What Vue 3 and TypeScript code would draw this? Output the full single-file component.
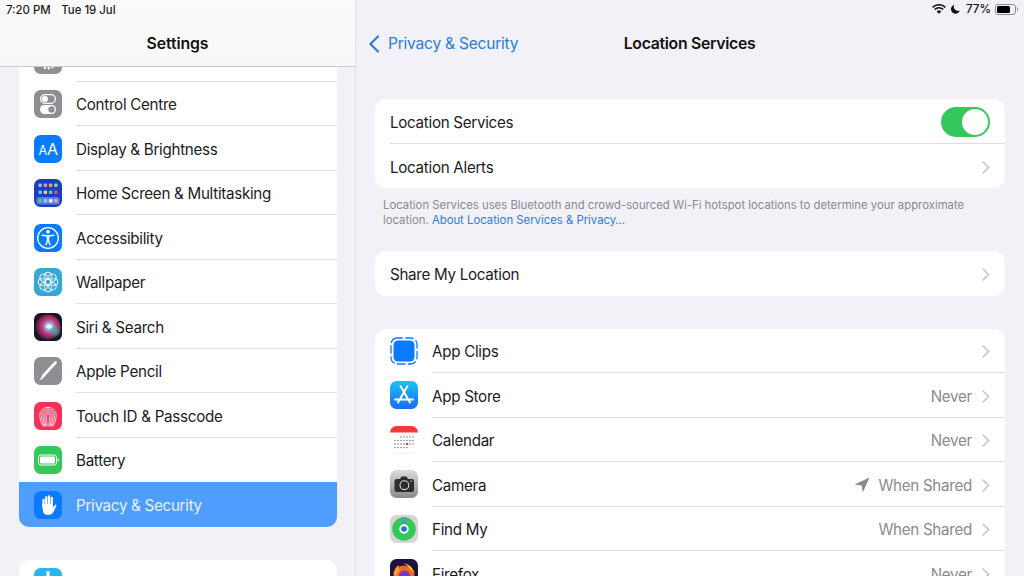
<script setup lang="ts">
interface SideRow { label: string; icon: string; selected?: boolean }
interface AppRow { label: string; icon: string; value?: string; located?: boolean }

const sideRows: SideRow[] = [
  { label: '', icon: 'general' },
  { label: 'Control Centre', icon: 'control' },
  { label: 'Display & Brightness', icon: 'display' },
  { label: 'Home Screen & Multitasking', icon: 'home' },
  { label: 'Accessibility', icon: 'access' },
  { label: 'Wallpaper', icon: 'wallpaper' },
  { label: 'Siri & Search', icon: 'siri' },
  { label: 'Apple Pencil', icon: 'pencil' },
  { label: 'Touch ID & Passcode', icon: 'touch' },
  { label: 'Battery', icon: 'battery' },
  { label: 'Privacy & Security', icon: 'privacy', selected: true },
]

const appRows: AppRow[] = [
  { label: 'App Clips', icon: 'clips' },
  { label: 'App Store', icon: 'store', value: 'Never' },
  { label: 'Calendar', icon: 'calendar', value: 'Never' },
  { label: 'Camera', icon: 'camera', value: 'When Shared', located: true },
  { label: 'Find My', icon: 'findmy', value: 'When Shared' },
  { label: 'Firefox', icon: 'firefox', value: 'Never' },
]

const petals = [0, 45, 90, 135, 180, 225, 270, 315]
const dockColors = ['#58c46b', '#8fd0f5', '#f4f4f8', '#e9a1a5']
const homeDots = [
  ['#9db5f5', '#d98ed8', '#f0a060', '#8fd0a5'],
  ['#5fd0f0', '#f5d060', '#50d0a0', '#e85050'],
]
const calendarDots = [
  { y: 11, xs: [11, 14, 17, 20, 23] },
  { y: 14.5, xs: [5, 8, 11, 14, 17, 20, 23] },
  { y: 18, xs: [5, 8, 11, 14, 20, 23] },
  { y: 21.5, xs: [5, 8, 11, 14, 17] },
]
const fingerprint = [1.5, 3.2, 4.9, 6.6, 8.3]
const printPath = (r: number) =>
  `M${14 - r * 0.6} 24 Q${14 - r} 20 ${14 - r} 13.5 a${r} ${r} 0 0 1 ${2 * r} 0 Q${14 + r} 20 ${14 + r * 0.6} 24`
</script>

<template>
  <div class="screen">
    <aside class="sidebar">
      <header class="side-head">
        <div class="status-left">
          <span>7:20 PM</span>
          <span>Tue 19 Jul</span>
        </div>
        <h1 class="side-title">Settings</h1>
      </header>
      <div class="side-scroll">
        <ul class="side-card">
          <li v-for="row in sideRows" :key="row.icon" class="side-row" :class="{ selected: row.selected }">
            <svg class="icon" viewBox="0 0 28 28">
              <template v-if="row.icon === 'general'">
                <rect width="28" height="28" fill="#8e8e93" />
                <circle cx="14" cy="14" r="8" fill="none" stroke="#fff" stroke-width="3" stroke-dasharray="2 1.6" />
                <circle cx="14" cy="14" r="5" fill="none" stroke="#fff" stroke-width="1.2" />
              </template>
              <template v-else-if="row.icon === 'control'">
                <rect width="28" height="28" fill="#8e8e93" />
                <rect x="6.6" y="4.6" width="14.8" height="8.8" rx="4.4" fill="none" stroke="#fff" stroke-width="1.2" />
                <circle cx="11" cy="9" r="3" fill="#fff" />
                <rect x="6" y="15" width="16" height="9" rx="4.5" fill="#fff" />
                <circle cx="17.5" cy="19.5" r="3.2" fill="#8e8e93" />
              </template>
              <template v-else-if="row.icon === 'display'">
                <rect width="28" height="28" fill="#0a7aff" />
                <text x="4.6" y="19.5" class="aa small-a">A</text>
                <text x="13" y="19.5" class="aa big-a">A</text>
              </template>
              <template v-else-if="row.icon === 'home'">
                <rect width="28" height="28" fill="#1b3fc4" />
                <template v-for="(line, r) in homeDots" :key="r">
                  <rect v-for="(color, c) in line" :key="c" :x="4.5 + c * 5.2" :y="4.5 + r * 7" width="3.4" height="3.4" rx="1" :fill="color" />
                </template>
                <rect x="2.5" y="18" width="23" height="7.5" rx="2.5" fill="#5d7de0" />
                <rect v-for="(color, c) in dockColors" :key="color" :x="4.5 + c * 5.2" y="20" width="3.6" height="3.6" rx="1" :fill="color" />
              </template>
              <template v-else-if="row.icon === 'access'">
                <rect width="28" height="28" fill="#0a7aff" />
                <circle cx="14" cy="14" r="10.3" fill="none" stroke="#fff" stroke-width="1.3" />
                <circle cx="14" cy="7.9" r="1.8" fill="#fff" />
                <path d="M8 11.2 L14 12 L20 11.2" fill="none" stroke="#fff" stroke-width="1.6" stroke-linecap="round" stroke-linejoin="round" />
                <path d="M12.6 11.8 H15.4 L15.2 16 L16.8 21.2 L15.4 21.6 L14 17.2 L12.6 21.6 L11.2 21.2 L12.8 16 Z" fill="#fff" />
              </template>
              <template v-else-if="row.icon === 'wallpaper'">
                <rect width="28" height="28" fill="#36a6d9" />
                <circle v-for="a in petals" :key="a" cx="14" cy="7.8" r="3.7" fill="none" stroke="#fff" stroke-width="1" :transform="`rotate(${a} 14 14)`" />
                <circle cx="14" cy="14" r="3" fill="none" stroke="#fff" stroke-width="1" />
              </template>
              <template v-else-if="row.icon === 'siri'">
                <defs>
                  <radialGradient id="siriOrb" cx="0.55" cy="0.48" r="0.55">
                    <stop offset="0" stop-color="#eaf8ff" />
                    <stop offset="0.25" stop-color="#7fb8de" />
                    <stop offset="0.52" stop-color="#d03a78" />
                    <stop offset="1" stop-color="#3a2040" />
                  </radialGradient>
                  <linearGradient id="siriBg" x1="0" y1="0" x2="1" y2="1">
                    <stop offset="0" stop-color="#2a0c20" />
                    <stop offset="1" stop-color="#06222c" />
                  </linearGradient>
                  <radialGradient id="siriTeal" cx="0.5" cy="0.5" r="0.5">
                    <stop offset="0" stop-color="#2fb8a8" stop-opacity="0.9" />
                    <stop offset="1" stop-color="#2fb8a8" stop-opacity="0" />
                  </radialGradient>
                </defs>
                <rect width="28" height="28" fill="url(#siriBg)" />
                <circle cx="14" cy="14" r="12.4" fill="url(#siriOrb)" />
                <circle cx="21" cy="18" r="6.5" fill="url(#siriTeal)" />
                <ellipse cx="15" cy="13.5" rx="3.4" ry="2.2" fill="#f4fbff" opacity="0.7" />
              </template>
              <template v-else-if="row.icon === 'pencil'">
                <rect width="28" height="28" fill="#8e8e93" />
                <path d="M21.5 5.5 L9.2 19" stroke="#fff" stroke-width="2.8" stroke-linecap="round" />
                <path d="M7.8 19 L9.8 20.8 L5.5 23.4 Z" fill="#fff" />
              </template>
              <template v-else-if="row.icon === 'touch'">
                <rect width="28" height="28" fill="#f5325c" />
                <path v-for="r in fingerprint" :key="r" :d="printPath(r)" fill="none" stroke="#ffe4ea" stroke-width="0.85" stroke-linecap="round" />
              </template>
              <template v-else-if="row.icon === 'battery'">
                <rect width="28" height="28" fill="#34c759" />
                <rect x="4.5" y="9" width="18" height="10" rx="2.4" fill="none" stroke="#fff" stroke-width="1" />
                <rect x="6" y="10.5" width="15" height="7" rx="1.2" fill="#fff" />
                <rect x="23.5" y="12.5" width="1.2" height="3" rx="0.6" fill="#fff" />
              </template>
              <template v-else>
                <rect width="28" height="28" fill="#0a7aff" />
                <path d="M9.5 9 V16 M12.2 6.5 V14 M15 5.5 V14 M17.8 7 V15" stroke="#fff" stroke-width="2.3" stroke-linecap="round" />
                <path d="M8.4 13 H19 V16.5 L21.4 13.5 L22.6 14.5 L19.4 21 Q17.8 24 14 24 Q9.6 24 8.9 20 Z" fill="#fff" />
              </template>
            </svg>
            <span class="side-label">{{ row.label }}</span>
          </li>
        </ul>
        <ul class="side-card second">
          <li class="side-row">
            <svg class="icon" viewBox="0 0 28 28">
              <rect width="28" height="28" fill="#2bb5f0" />
              <path d="M14 3 L14 9" stroke="#fff" stroke-width="3" />
            </svg>
          </li>
        </ul>
      </div>
    </aside>

    <main class="detail">
      <div class="status-right">
        <svg class="wifi" viewBox="0 0 14 10">
          <path d="M0.6 3.4 A9 9 0 0 1 13.4 3.4 M2.7 5.5 A6 6 0 0 1 11.3 5.5" fill="none" stroke="#111" stroke-width="1.6" />
          <path d="M4.7 7.4 A3.2 3.2 0 0 1 9.3 7.4 L7 9.8 Z" fill="#111" />
        </svg>
        <svg class="moon" viewBox="0 0 10 10">
          <path d="M3.6 0.4 A5 5 0 1 0 9.7 6.6 A4.6 4.6 0 0 1 3.6 0.4 Z" fill="#111" />
        </svg>
        <span class="percent">77%</span>
        <span class="batt"><span class="batt-level"></span></span>
        <span class="batt-tip"></span>
      </div>

      <nav class="nav">
        <div class="back">
          <svg class="back-chevron" viewBox="0 0 12 18">
            <path d="M10 1.5 L2.4 9 L10 16.5" fill="none" stroke="#2a7ed8" stroke-width="2.2" stroke-linecap="round" stroke-linejoin="round" />
          </svg>
          <span>Privacy &amp; Security</span>
        </div>
        <h2 class="nav-title">Location Services</h2>
      </nav>

      <section class="card">
        <div class="row">
          <span class="row-label">Location Services</span>
          <span class="toggle"><span class="knob"></span></span>
        </div>
        <div class="row">
          <span class="row-label">Location Alerts</span>
          <svg class="chevron" viewBox="0 0 8 13"><path d="M1 1 L6.6 6.5 L1 12" /></svg>
        </div>
      </section>
      <p class="foot">
        Location Services uses Bluetooth and crowd-sourced Wi-Fi hotspot locations to determine your approximate
        location. <a class="foot-link">About Location Services &amp; Privacy…</a>
      </p>

      <section class="card share">
        <div class="row">
          <span class="row-label">Share My Location</span>
          <svg class="chevron" viewBox="0 0 8 13"><path d="M1 1 L6.6 6.5 L1 12" /></svg>
        </div>
      </section>

      <section class="card apps">
        <div v-for="app in appRows" :key="app.label" class="row app-row">
          <svg class="icon" viewBox="0 0 28 28">
            <template v-if="app.icon === 'clips'">
              <rect width="28" height="28" fill="#fff" />
              <rect x="1" y="1" width="26" height="26" rx="6.5" fill="none" stroke="#0a7aff" stroke-width="1.3" stroke-dasharray="8.4 2.4" stroke-dashoffset="3" />
              <rect x="3.5" y="3.5" width="21" height="21" rx="4.5" fill="#0a7aff" />
            </template>
            <template v-else-if="app.icon === 'store'">
              <defs>
                <linearGradient id="storeBg" x1="0" y1="0" x2="0" y2="1">
                  <stop offset="0" stop-color="#1cc0f8" />
                  <stop offset="1" stop-color="#1a6cf0" />
                </linearGradient>
              </defs>
              <rect width="28" height="28" fill="url(#storeBg)" />
              <path d="M10.5 5 L20 21.5 M17.5 5 L8 21.5 M5 18.6 H23" stroke="#fff" stroke-width="2" stroke-linecap="round" fill="none" />
            </template>
            <template v-else-if="app.icon === 'calendar'">
              <rect width="28" height="28" fill="#fff" />
              <rect width="28" height="6.5" fill="#f43a36" />
              <rect y="26.5" width="28" height="1.5" fill="#f2f2f2" />
              <template v-for="line in calendarDots" :key="line.y">
                <circle v-for="x in line.xs" :key="x" :cx="x" :cy="line.y" r="0.75" fill="#77777c" />
              </template>
              <circle cx="17" cy="18" r="1.2" fill="#e8383a" />
            </template>
            <template v-else-if="app.icon === 'camera'">
              <defs>
                <linearGradient id="camBg" x1="0" y1="0" x2="0" y2="1">
                  <stop offset="0" stop-color="#dcdcde" />
                  <stop offset="1" stop-color="#8a8a8c" />
                </linearGradient>
              </defs>
              <rect width="28" height="28" fill="url(#camBg)" />
              <path d="M6.5 9 H10 L11.5 6.6 H16.5 L18 9 H22 Q24 9 24 11 V20 Q24 22 22 22 H6.5 Q4.5 22 4.5 20 V11 Q4.5 9 6.5 9 Z" fill="#2c2c2e" />
              <circle cx="14.4" cy="15.2" r="4.4" fill="#2c2c2e" stroke="#d8d8d8" stroke-width="1.1" />
              <circle cx="21" cy="11.2" r="0.8" fill="#f0d060" />
            </template>
            <template v-else-if="app.icon === 'findmy'">
              <rect width="28" height="28" fill="#d4d6d4" />
              <circle cx="14" cy="14" r="11.8" fill="#34c85a" />
              <path d="M11.5 2.2 H16.5 L15.6 9 H12.4 Z" fill="#4f9dc0" />
              <circle cx="14" cy="14" r="4.7" fill="#fff" />
              <circle cx="14" cy="14" r="2.8" fill="#1f74d8" />
            </template>
            <template v-else>
              <rect width="28" height="28" fill="#1f1240" />
              <circle cx="14" cy="17" r="10.5" fill="#f2681f" />
              <path d="M13 4 Q24 6 25 17 Q24 12 20 10 Q18 6 13 4 Z" fill="#ffcb2f" />
              <path d="M3.5 14 Q5 8 9 6 Q8 10 10 11 L5 19 Z" fill="#ff9a2c" />
              <circle cx="14.5" cy="17" r="5.5" fill="#7a36c8" />
            </template>
          </svg>
          <span class="row-label">{{ app.label }}</span>
          <span class="spacer"></span>
          <svg v-if="app.located" class="arrow" viewBox="0 0 16 16">
            <path d="M15.5 0.6 L0.5 7.6 L7.6 8.6 L8.8 15.6 Z" fill="#8a8a8e" />
          </svg>
          <span v-if="app.value" class="value">{{ app.value }}</span>
          <svg class="chevron" viewBox="0 0 8 13"><path d="M1 1 L6.6 6.5 L1 12" /></svg>
        </div>
      </section>
    </main>
  </div>
</template>

<style>
html, body { margin: 0; padding: 0; overflow: hidden; }
</style>

<style scoped>
.screen {
  width: 1024px;
  height: 576px;
  display: flex;
  overflow: hidden;
  background: #f1f1f7;
  color: #1c1c1e;
  font-family: Inter, "Liberation Sans", sans-serif;
  font-size: 15.2px;
  letter-spacing: -0.3px;
}
.sidebar {
  width: 355px;
  flex: none;
  display: flex;
  flex-direction: column;
  border-right: 1px solid #dfdfe3;
  height: 576px;
  overflow: hidden;
}
.side-head {
  position: relative;
  z-index: 2;
  height: 66px;
  flex: none;
  background: linear-gradient(#fbfbfb, #f8f8f8);
  border-bottom: 1px solid #c9c9cb;
}
.status-left {
  display: flex;
  gap: 10.5px;
  padding: 3px 0 0 6px;
  height: 15px;
  line-height: 15px;
  font-size: 11.4px;
  font-weight: 500;
  letter-spacing: 0;
}
.side-title {
  margin: 0;
  padding-top: 16px;
  text-align: center;
  font-size: 15.8px;
  line-height: 20px;
  font-weight: 600;
  letter-spacing: -0.1px;
  color: #111;
}
.side-scroll {
  flex: 1;
  margin-top: -30px;
  padding: 0 18px 0 19px;
}
.side-card {
  list-style: none;
  margin: 0;
  padding: 0;
  background: #fff;
  border-radius: 10px;
  overflow: hidden;
}
.side-card.second {
  margin-top: 33px;
}
.side-row {
  display: flex;
  align-items: center;
  box-sizing: border-box;
  height: 44.5px;
  padding: 2px 0 0 15px;
  gap: 14px;
  position: relative;
}
.side-row .icon { margin-top: -1.5px; }
.side-row.selected {
  background: #4f9dff;
  color: #e8f2ff;
}
.side-row:not(.selected):not(:nth-last-child(2)):not(:last-child)::after {
  content: "";
  position: absolute;
  left: 57px;
  right: 0;
  bottom: 0;
  height: 1px;
  background: #dedee0;
}
.icon {
  width: 28px;
  height: 28px;
  flex: none;
  border-radius: 6.5px;
  overflow: hidden;
  display: block;
}
.aa {
  fill: #fff;
  font-family: Inter, sans-serif;
  font-weight: 400;
  letter-spacing: 0;
}
.small-a { font-size: 12.5px; }
.big-a { font-size: 16px; }
.side-label {
  white-space: nowrap;
}
.detail {
  flex: 1;
  min-width: 0;
  height: 576px;
  padding: 0 19px 0 19px;
  box-sizing: border-box;
  overflow: hidden;
}
.status-right {
  height: 18px;
  margin-right: -13px;
  display: flex;
  align-items: center;
  justify-content: flex-end;
  font-size: 11.6px;
  font-weight: 500;
  letter-spacing: 0;
  color: #111;
}
.wifi { width: 14px; height: 10px; margin-right: 5px; }
.moon { width: 9px; height: 10px; margin-right: 6px; }
.percent { margin-right: 3.5px; }
.batt {
  width: 21.5px;
  height: 11px;
  box-sizing: border-box;
  border: 1px solid #8e8e8e;
  border-radius: 3px;
  padding: 1px;
  display: block;
}
.batt-level {
  display: block;
  height: 100%;
  width: 77%;
  background: #000;
  border-radius: 1.5px;
}
.batt-tip {
  width: 1.5px;
  height: 4px;
  margin-left: 0.5px;
  background: #8e8e8e;
  border-radius: 0 1px 1px 0;
}
.nav {
  height: 49px;
  margin: 0 -19px 32px;
  padding: 16px 13px 0 12px;
  display: grid;
  grid-template-columns: 1fr auto 1fr;
  align-items: start;
  box-sizing: border-box;
}
.back {
  display: flex;
  align-items: center;
  gap: 8px;
  color: #2a7ed8;
  height: 20px;
  line-height: 20px;
  font-size: 15.6px;
  letter-spacing: -0.25px;
}
.back-chevron { width: 12px; height: 18px; }
.nav-title {
  margin: 0;
  font-size: 15.8px;
  line-height: 20px;
  font-weight: 600;
  letter-spacing: -0.3px;
  color: #111;
}
.card {
  background: #fff;
  border-radius: 11px;
  overflow: hidden;
}
.row {
  display: flex;
  align-items: center;
  box-sizing: border-box;
  height: 44.7px;
  padding: 3px 15px 0;
  position: relative;
  justify-content: space-between;
}
.row:not(:last-child)::after {
  content: "";
  position: absolute;
  left: 15px;
  right: 0;
  bottom: 0;
  height: 1px;
  background: #dedee0;
}
.toggle {
  width: 49px;
  height: 30px;
  margin-top: -2px;
  box-sizing: border-box;
  background: #34c759;
  border-radius: 15px;
  padding: 2px;
  display: flex;
  justify-content: flex-end;
}
.knob {
  width: 26px;
  height: 26px;
  border-radius: 50%;
  background: #fff;
}
.chevron {
  width: 8px;
  height: 13px;
  flex: none;
  fill: none;
  stroke: #c4c4c7;
  stroke-width: 1.6;
  stroke-linecap: round;
  stroke-linejoin: round;
}
.foot {
  margin: 0;
  padding: 10px 8px 0;
  height: 62.5px;
  box-sizing: border-box;
  font-size: 11.34px;
  line-height: 15px;
  letter-spacing: 0;
  color: #8a8a8e;
}
.foot-link { color: #2a7ed8; }
.share .row { padding-top: 2px; }
.apps { margin-top: 33px; }
.app-row {
  height: 44.5px;
  padding-top: 2px;
  justify-content: flex-start;
  gap: 14px;
}
.app-row .icon { margin-top: -2px; }
.app-row:not(:last-child)::after { left: 57px; }
.spacer { flex: 1; }
.arrow { width: 16px; height: 16px; margin-right: -6px; margin-left: 1px; }
.value { color: #8a8a8e; }
.app-row .chevron { margin-left: -4px; }
</style>
